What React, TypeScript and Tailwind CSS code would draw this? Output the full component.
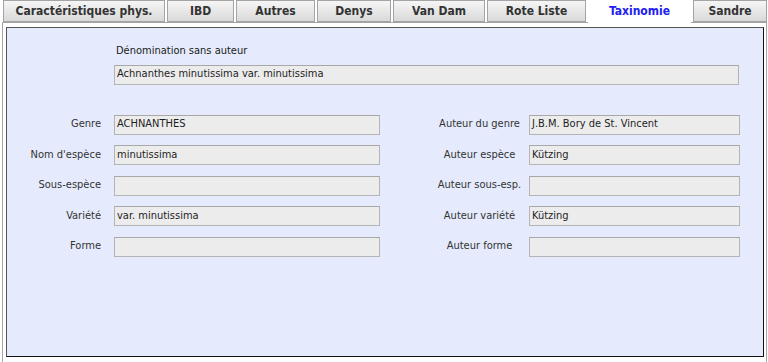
const tabs = [
  { label: "Caractéristiques phys.", w: "w-[162px]" },
  { label: "IBD", w: "w-[67px]" },
  { label: "Autres", w: "w-[79px]" },
  { label: "Denys", w: "w-[74px]" },
  { label: "Van Dam", w: "w-[92px]" },
  { label: "Rote Liste", w: "w-[99px]" },
  { label: "Taxinomie", w: "w-[103px]", active: true },
  { label: "Sandre", w: "w-[74px]" },
];

const rows = [
  { left: "Genre", leftValue: "ACHNANTHES", right: "Auteur du genre", rightValue: "J.B.M. Bory de St. Vincent" },
  { left: "Nom d'espèce", leftValue: "minutissima", right: "Auteur espèce", rightValue: "Kützing" },
  { left: "Sous-espèce", leftValue: "", right: "Auteur sous-esp.", rightValue: "" },
  { left: "Variété", leftValue: "var. minutissima", right: "Auteur variété", rightValue: "Kützing" },
  { left: "Forme", leftValue: "", right: "Auteur forme", rightValue: "" },
];

function Field({ value, className }: { value: string; className: string }) {
  return (
    <div
      className={`h-[20px] bg-[#ececec] border border-[#b4b4b4] border-t-[#a8a8a8] pl-[2px] flex items-center text-[11px] text-[#1e1e1e] ${className}`}
    >
      {value}
    </div>
  );
}

export default function App() {
  return (
    <div
      className="w-[768px] h-[362px] bg-white overflow-hidden"
      style={{ fontFamily: '"DejaVu Sans Condensed", "Liberation Sans", sans-serif' }}
    >
      <div className="flex items-end gap-[2px] pl-[3px] h-[22px]">
        {tabs.map((t) =>
          t.active ? (
            <div
              key={t.label}
              className={`${t.w} h-[23px] -mb-px relative z-10 bg-white flex items-center justify-center pb-[2px] text-[12px] font-bold text-[#2020f0]`}
            >
              {t.label}
            </div>
          ) : (
            <div
              key={t.label}
              className={`${t.w} h-[22px] border border-[#a4a4a4] bg-gradient-to-b from-[#f6f6f6] to-[#d9d9d9] flex items-center justify-center text-[12px] font-bold text-[#333]`}
            >
              {t.label}
            </div>
          )
        )}
      </div>

      <div className="ml-[2px] w-[765px] h-[341px] border border-b-0 border-[#a4a4a4] pl-[3px] pr-[2px] pt-[4px]">
        <div className="h-[330px] bg-[#e5ebfc] border border-[#555] border-r-[#111] border-b-[#111]">
          <div className="pl-[109px] pt-[15px] text-[11px] text-[#1a1a1a]">Dénomination sans auteur</div>
          <div className="pl-[107px] mt-[5px]">
            <Field value="Achnanthes minutissima var. minutissima" className="w-[625px]" />
          </div>

          <div className="mt-[30px] flex flex-col gap-[10.5px]">
            {rows.map((r) => (
              <div key={r.left} className="flex items-center">
                <div className="w-[107px] pr-[13px] text-right text-[11px] text-[#333]">{r.left}</div>
                <Field value={r.leftValue} className="w-[266px]" />
                <div className="ml-[50px] w-[99px] text-center text-[11px] text-[#333]">{r.right}</div>
                <Field value={r.rightValue} className="w-[211px]" />
              </div>
            ))}
          </div>
        </div>
      </div>
    </div>
  );
}
